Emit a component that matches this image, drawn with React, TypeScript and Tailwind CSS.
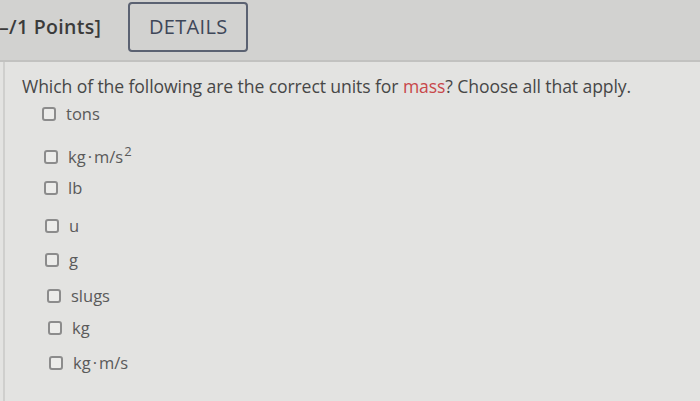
import React from "react";

const Dot = () => <span className="mx-[2px]">·</span>;

const options: { label: React.ReactNode; h: number; ml: number }[] = [
  { label: "tons", h: 43, ml: 42 },
  { label: <>kg<Dot />m/s<span className="text-[13px] relative -top-[7px] ml-[1px]">2</span></>, h: 31, ml: 44 },
  { label: "lb", h: 38, ml: 44 },
  { label: "u", h: 34, ml: 45 },
  { label: "g", h: 36, ml: 45 },
  { label: "slugs", h: 32, ml: 47 },
  { label: "kg", h: 35, ml: 48 },
  { label: <>kg<Dot />m/s</>, h: 35, ml: 49 },
];

export default function App() {
  return (
    <div
      className="w-[700px] h-[401px] overflow-hidden bg-[#e3e3e1] flex flex-col"
      style={{ fontFamily: "'Open Sans', 'Noto Sans', sans-serif" }}
    >
      <div className="h-[62px] bg-[#d2d2d0] border-b-2 border-[#c2c2c0] flex items-start shrink-0">
        <div className="pt-[12px] -ml-[1px] text-[19.5px] font-semibold text-[#3b3b3b] tracking-[0.3px]">
          –/1 Points]
        </div>
        <div className="ml-[27px] mt-[2px] w-[120px] h-[50px] border-2 border-[#5b6272] rounded-[4px] flex items-center justify-center text-[20px] font-medium text-[#3e4759] tracking-[0.3px]">
          DETAILS
        </div>
      </div>
      <div className="flex-1 border-l-2 border-[#cfcfcd] ml-[3px] pl-[17px] pt-[13px]">
        <div className="text-[17.6px] text-[#474747] leading-[22px] tracking-[-0.1px]">
          Which of the following are the correct units for{" "}
          <span className="text-[#c8474a]">mass</span>? Choose all that apply.
        </div>
        <div className="flex flex-col mt-[7px]">
          {options.map((o, i) => (
            <div
              key={i}
              className="flex items-start"
              style={{ height: o.h, marginLeft: o.ml - 22 }}
            >
              <div className="w-[14px] h-[14px] mt-[3px] border-2 border-[#8c8c8c] rounded-[3px] bg-[#ececea] shrink-0" />
              <div className="ml-[10px] text-[16.5px] leading-[20px] text-[#5a5a5a]">
                {o.label}
              </div>
            </div>
          ))}
        </div>
      </div>
    </div>
  );
}
